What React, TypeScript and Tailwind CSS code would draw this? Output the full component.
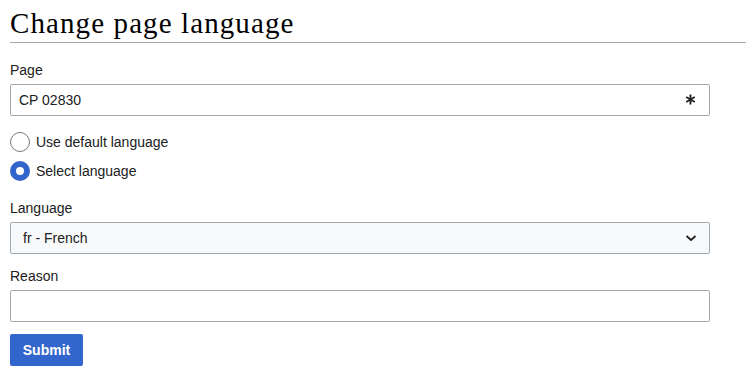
export default function App() {
  return (
    <div className="min-h-screen bg-white pl-[10px] pr-[1px] text-[14px] text-[#202122]" style={{ fontFamily: '"Liberation Sans", Arial, sans-serif' }}>
      <h1
        className="border-b border-[#a2a9b1] pt-[5px] text-[29px] font-normal leading-[37px] tracking-[1.1px] text-[#000]"
        style={{ fontFamily: '"Liberation Serif", "DejaVu Serif", Georgia, serif' }}
      >
        Change page language
      </h1>

      <form className="flex w-[700px] flex-col" onSubmit={(e) => e.preventDefault()}>
        <label className="mt-[17px] leading-[20px]">Page</label>
        <div className="relative mt-[4px]">
          <input
            defaultValue="CP 02830"
            className="h-[32px] w-full rounded-[2px] border border-[#a2a9b1] bg-white px-[8px] text-[14px] text-[#202122] outline-none"
          />
          <svg className="absolute right-[14px] top-[10px] h-[11px] w-[11px]" viewBox="0 0 20 20" fill="none" stroke="#202122" strokeWidth="3.4">
            <path d="M10 1v18M2.2 5.5l15.6 9M2.2 14.5l15.6-9" />
          </svg>
        </div>

        <div className="mt-[16px] flex flex-col gap-[9px]">
          <label className="flex items-center gap-[6px] leading-[20px]">
            <span className="h-[20px] w-[20px] rounded-full border border-[#72777d] bg-white" />
            Use default language
          </label>
          <label className="flex items-center gap-[6px] leading-[20px]">
            <span className="h-[20px] w-[20px] rounded-full border-[6px] border-[#36c] bg-white" />
            Select language
          </label>
        </div>

        <label className="mt-[17px] leading-[20px]">Language</label>
        <div className="mt-[4px] flex h-[32px] items-center justify-between rounded-[2px] border border-[#a2a9b1] bg-[#f8f9fa] pl-[12px] pr-[12px]">
          <span>fr - French</span>
          <svg className="h-[8px] w-[12px]" viewBox="0 0 12 8" fill="none" stroke="#202122" strokeWidth="1.8">
            <path d="M1.5 2l4.5 4 4.5-4" />
          </svg>
        </div>

        <label className="mt-[12px] leading-[20px]">Reason</label>
        <input className="mt-[4px] h-[32px] w-full rounded-[2px] border border-[#a2a9b1] bg-white px-[8px] text-[14px] outline-none" />

        <div className="mt-[12px]">
          <button type="submit" className="h-[32px] w-[73px] rounded-[2px] bg-[#36c] text-[14px] font-bold text-white">
            Submit
          </button>
        </div>
      </form>
    </div>
  );
}
